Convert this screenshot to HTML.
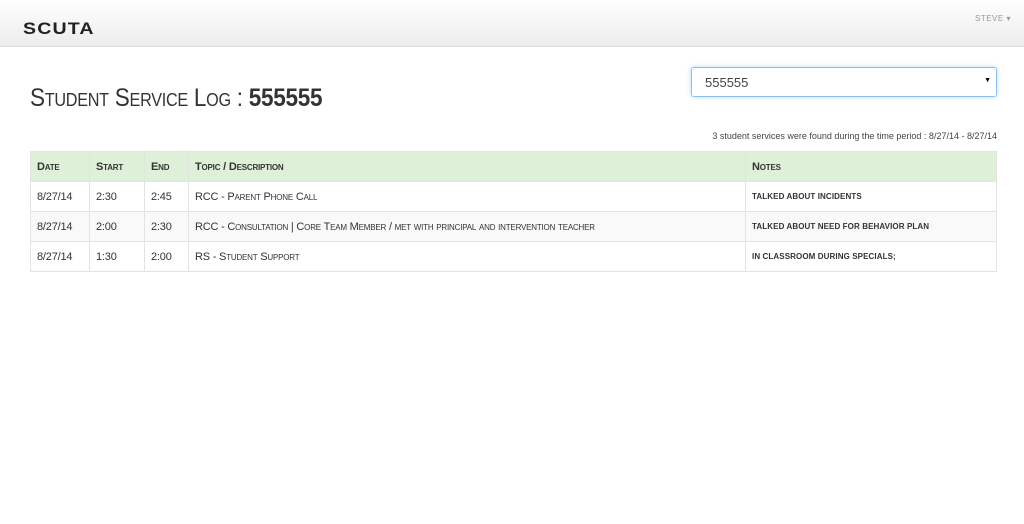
<!DOCTYPE html>
<html><head><style>
body{margin:0;width:1024px;height:524px;background:#fff;font-family:"Liberation Sans",sans-serif;position:relative;overflow:hidden;color:#333}
.nav{position:absolute;left:0;top:0;width:1024px;height:46px;background:linear-gradient(#fff,#ececec);border-bottom:1px solid #ddd}
.logo{position:absolute;left:23px;top:19px;font-weight:bold;font-size:17px;color:#222;letter-spacing:1px;transform:scaleX(1.15);transform-origin:left}
.steve{position:absolute;left:975px;top:14px;font-size:8px;color:#999;letter-spacing:.5px}
h1{position:absolute;left:30px;top:84px;margin:0;font-size:25px;font-weight:normal;font-variant:small-caps;color:#333;letter-spacing:-0.3px;transform:scaleX(.9);transform-origin:left}
h1 b{font-weight:bold}
.sel{position:absolute;left:691px;top:67px;width:304px;height:28px;border:1px solid #8ec1ee;border-radius:3px;box-shadow:0 0 4px rgba(102,175,233,.5);font-size:13px;color:#444}
.sel span{position:absolute;left:13px;top:7px}
.sel i{position:absolute;right:5px;top:9px;font-size:7px;font-style:normal;color:#000}
.found{position:absolute;right:27px;top:131px;font-size:9px;color:#444}
table{position:absolute;left:30px;top:151px;width:967px;border-collapse:collapse;border:1px solid #e3e3e3;font-size:11px;font-variant:small-caps;letter-spacing:-0.2px}
td,th{height:29px;border:1px solid #e3e3e3;padding:0 0 0 6px;text-align:left;color:#333}
th{background:#dff0d8;font-weight:bold;font-size:11px}
td.n{font-weight:bold;font-size:8px;text-transform:uppercase;letter-spacing:0.1px}
.g td{background:#f9f9f9}
</style></head><body>
<div class="nav"><div class="logo">SCUTA</div><div class="steve">STEVE ▾</div></div>
<h1>Student Service Log : <b>555555</b></h1>
<div class="sel"><span>555555</span><i>▼</i></div>
<div class="found">3 student services were found during the time period : 8/27/14 - 8/27/14</div>
<table>
<tr><th style="width:52px">Date</th><th style="width:48px">Start</th><th style="width:37px">End</th><th style="width:550px">Topic / Description</th><th>Notes</th></tr>
<tr><td>8/27/14</td><td>2:30</td><td>2:45</td><td>RCC - Parent Phone Call</td><td class="n">talked about incidents</td></tr>
<tr class="g"><td>8/27/14</td><td>2:00</td><td>2:30</td><td>RCC - Consultation | Core Team Member / met with principal and intervention teacher</td><td class="n">talked about need for behavior plan</td></tr>
<tr><td>8/27/14</td><td>1:30</td><td>2:00</td><td>RS - Student Support</td><td class="n">in classroom during specials;</td></tr>
</table>
</body></html>
